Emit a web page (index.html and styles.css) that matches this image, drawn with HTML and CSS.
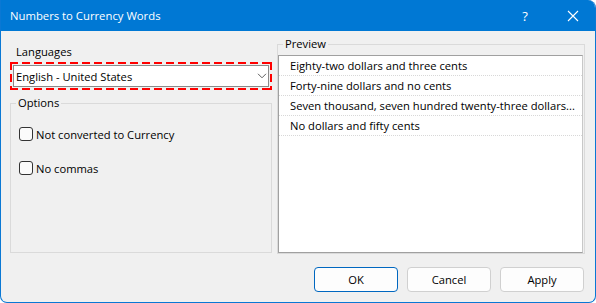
FILE: index.html
```html
<!DOCTYPE html>
<html>
<head>
<meta charset="utf-8">
<link rel="stylesheet" href="styles.css">
</head>
<body>
<div class="window">
  <div class="titlebar">
    <span class="title">Numbers to Currency Words</span>
    <span class="tb-help">?</span>
    <span class="tb-close">
      <svg width="12" height="12" viewBox="0 0 12 12"><path d="M1 1 L11 11 M11 1 L1 11" stroke="#fff" stroke-width="1.1" fill="none"/></svg>
    </span>
  </div>
  <div class="content">
    <div class="main">
      <div class="left">
        <div class="lang-label">Languages</div>
        <div class="highlight">
          <div class="combo">
            <span class="combo-text">English - United States</span>
            <svg class="chevron" width="10" height="6" viewBox="0 0 10 6"><path d="M1 0.8 L5 4.8 L9 0.8" stroke="#606060" stroke-width="1" fill="none"/></svg>
          </div>
        </div>
        <fieldset class="group options">
          <legend>Options</legend>
          <div class="options-body">
            <label class="check"><span class="box"></span>Not converted to Currency</label>
            <label class="check"><span class="box"></span>No commas</label>
          </div>
        </fieldset>
      </div>
      <fieldset class="group preview">
        <legend>Preview</legend>
        <div class="list">
          <div class="row">Eighty-two dollars and three cents</div>
          <div class="row">Forty-nine dollars and no cents</div>
          <div class="row">Seven thousand, seven hundred twenty-three dollars...</div>
          <div class="row">No dollars and fifty cents</div>
        </div>
      </fieldset>
    </div>
    <div class="buttons">
      <button class="btn default">OK</button>
      <button class="btn">Cancel</button>
      <button class="btn">Apply</button>
    </div>
  </div>
</div>
</body>
</html>
```

FILE: styles.css
```css
html, body {
  margin: 0;
  padding: 0;
  background: #ffffff;
}
body {
  font-family: "Open Sans", "Noto Sans", sans-serif;
  font-size: 11.2px;
  color: #000;
}
.window {
  width: 596px;
  height: 303px;
  box-sizing: border-box;
  border: 1px solid #0a78d4;
  border-top: none;
  border-radius: 0 8px 7px 7px;
  background: #f0f0f0;
  display: flex;
  flex-direction: column;
  overflow: hidden;
}
.titlebar {
  height: 31px;
  background: #0078d4;
  color: #fff;
  display: flex;
  align-items: center;
  flex-shrink: 0;
  margin: 0 -1px;
}
.title {
  margin-left: 10px;
  font-size: 11.3px;
  flex: 1;
  padding-bottom: 1px;
}
.tb-help {
  width: 14px;
  text-align: center;
  font-size: 13px;
  margin-right: 35px;
}
.tb-close {
  width: 12px;
  height: 12px;
  margin-right: 17px;
  display: flex;
}
.content {
  flex: 1;
  display: flex;
  flex-direction: column;
  padding: 0 10px 10px 9px;
}
.main {
  display: flex;
  gap: 5px;
  height: 223px;
}
.left {
  width: 262px;
  display: flex;
  flex-direction: column;
}
.lang-label {
  padding: 12px 0 0 6px;
  height: 19px;
  line-height: 17px;
}
.highlight {
  height: 28px;
  box-sizing: border-box;
  padding: 3px;
  background:
    repeating-linear-gradient(90deg, #ff0000 0 8px, transparent 8px 12px) left top / 100% 2px no-repeat,
    repeating-linear-gradient(90deg, #ff0000 0 8px, transparent 8px 12px) left bottom / 100% 2px no-repeat,
    repeating-linear-gradient(180deg, #ff0000 0 8px, transparent 8px 12px) left top / 2px 100% no-repeat,
    repeating-linear-gradient(180deg, #ff0000 0 8px, transparent 8px 12px) right top / 2px 100% no-repeat;
}
.combo {
  height: 22px;
  box-sizing: border-box;
  border: 1px solid #8a8a8a;
  background: #fff;
  display: flex;
  align-items: center;
  padding: 0 1px 0 2px;
}
.combo-text {
  flex: 1;
}
.group {
  margin: 0;
  padding: 0;
  border: 1px solid #dadada;
  min-width: 0;
  box-sizing: border-box;
}
.group legend {
  padding: 0 2px;
  margin-left: 5px;
  line-height: 14px;
}
.options {
  margin-top: 6px;
  height: 157px;
}
.options-body {
  padding: 17px 0 0 8px;
  display: flex;
  flex-direction: column;
  gap: 20px;
}
.check {
  display: flex;
  align-items: center;
  height: 14px;
}
.box {
  width: 12px;
  height: 12px;
  border: 1px solid #333;
  border-radius: 3px;
  background: #fbfbfb;
  margin-right: 3px;
}
.preview {
  flex: 1;
  margin-top: 6px;
  height: 217px;
  padding: 4px 1px 0 0;
}
.list {
  height: 198px;
  box-sizing: border-box;
  border: 1px solid #a0a0a0;
  border-right-color: #c8c8c8;
  background: #fff;
}
.row {
  height: 19px;
  line-height: 19px;
  padding-left: 11px;
  border-bottom: 1px dotted #d8d8d8;
  white-space: nowrap;
}
.buttons {
  display: flex;
  justify-content: flex-end;
  gap: 9px;
  margin-top: 13px;
  padding-right: 1px;
}
.btn {
  width: 84px;
  height: 25px;
  box-sizing: border-box;
  border: 1px solid #d0d0d0;
  border-radius: 4px;
  background: #fdfdfd;
  font-family: inherit;
  font-size: 11.2px;
  color: #000;
  padding: 0;
}
.btn.default {
  border-color: #0067c0;
}
```
